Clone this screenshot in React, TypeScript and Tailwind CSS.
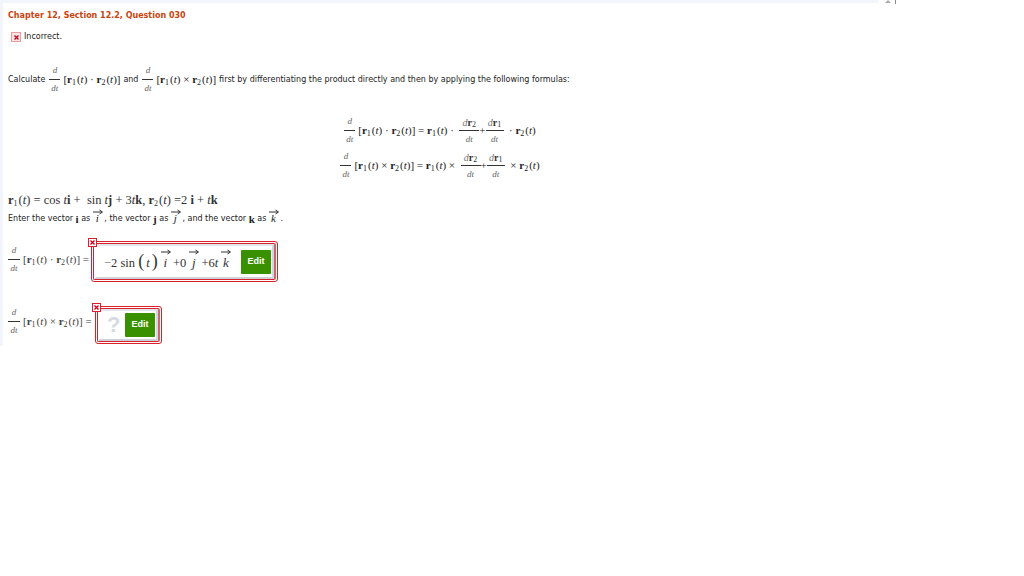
import React from 'react';

const Frac: React.FC<{ top: React.ReactNode; bottom: React.ReactNode; w: string }> = ({ top, bottom, w }) => (
  <span className={`inline-flex flex-col items-center font-['Liberation_Serif',serif] ${w}`}>
    <span className="h-[17px] flex items-end pb-[2px] leading-none italic text-[9px] text-[#666]">{top}</span>
    <span className="w-full h-px bg-[#333]"></span>
    <span className="h-[17px] flex items-start pt-[4px] leading-none italic text-[9px] text-[#666]">{bottom}</span>
  </span>
);

const D: React.FC = () => <span className="relative top-[-2px]">d</span>;

const B: React.FC<{ children: React.ReactNode }> = ({ children }) => <b className="font-bold">{children}</b>;

const R: React.FC<{ n: string }> = ({ n }) => (
  <span><B>r</B><span className="text-[8px] leading-none relative top-[2px]">{n}</span><span className="ml-px">(<i>t</i>)</span></span>
);

const Vec: React.FC<{ c: string; size: string; top: string }> = ({ c, size, top }) => (
  <span className="relative inline-block mx-px min-w-[7px] text-center leading-none">
    <i className={size}>{c}</i>
    <svg className={`absolute left-[-1px] ${top}`} width="10" height="6" viewBox="0 0 10 6">
      <path d="M0 3H9M6.5 1L9.5 3L6.5 5" fill="none" stroke="#333" strokeWidth="1" />
    </svg>
  </span>
);

const XMark: React.FC<{ box: string }> = ({ box }) => (
  <span className={`flex items-center justify-center border ${box}`}>
    <svg width="5" height="5" viewBox="0 0 5 5"><path d="M0.5 0.5L4.5 4.5M4.5 0.5L0.5 4.5" stroke="#d0021b" strokeWidth="1.4" /></svg>
  </span>
);

const Bracket: React.FC<{ op: string }> = ({ op }) => (
  <span>[<R n="1" /> {op} <R n="2" />]</span>
);

const DrTop: React.FC<{ n: string }> = ({ n }) => (
  <span className="not-italic text-[10px] text-[#333]"><i className="text-[#777]">d</i><B>r</B><span className="text-[8px] relative top-[1px]">{n}</span></span>
);

const EditBtn: React.FC = () => (
  <span className="flex items-center justify-center w-[30px] h-[24px] bg-[#3a9100] text-white text-[9px] font-bold font-['Liberation_Sans',sans-serif] rounded-[1px]">Edit</span>
);

const App: React.FC = () => {
  return (
    <div className="relative w-[1024px] h-[576px] bg-white overflow-hidden font-['DejaVu_Sans',sans-serif] text-[8px] text-[#222]">
      {/* page frame strips */}
      <div className="absolute left-0 top-0 w-[878px] h-[3px] bg-[#f2f6fc]"></div>
      <div className="absolute left-0 top-0 w-[3px] h-[346px] bg-[#f2f6fc]"></div>
      <div className="absolute left-[884px] top-0 w-[8px] h-[4px] flex justify-center">
        <span className="w-0 h-0 border-x-[3px] border-x-transparent border-b-[3px] border-b-[#aaa]"></span>
      </div>
      <div className="absolute left-[895px] top-0 w-px h-[4px] bg-[#888]"></div>

      <div className="pl-[8px] pt-[12px]">
        <h1 className="h-[8px] leading-[8px] text-[8px] font-bold text-[#c8440f]">Chapter 12, Section 12.2, Question 030</h1>

        <div className="flex items-center gap-[3px] mt-[12px] ml-[3px] h-[10px]">
          <XMark box="w-[10px] h-[10px] bg-[#fbe6e6] border-[#ee9a9a]" />
          <span>Incorrect.</span>
        </div>

        <div className="flex items-center mt-[20px] h-[35px]">
          <span className="mr-[4px]">Calculate</span>
          <Frac w="w-[11px]" top={<D />} bottom="dt" />
          <span className="ml-[3px] w-[57px] whitespace-nowrap font-['Liberation_Serif',serif] text-[11px]"><Bracket op="·" /></span>
          <span className="ml-[3px] mr-[4px]">and</span>
          <Frac w="w-[11px]" top={<D />} bottom="dt" />
          <span className="ml-[3px] font-['Liberation_Serif',serif] text-[11px]"><Bracket op="×" /></span>
          <span className="ml-[3px]">first by differentiating the product directly and then by applying the following formulas:</span>
        </div>

        {/* formulas */}
        <div className="flex flex-col items-center w-[864px] mt-[16px] font-['Liberation_Serif',serif] text-[11px]">
          <div className="flex items-center h-[35px]">
            <Frac w="w-[11px]" top={<D />} bottom="dt" />
            <span className="ml-[3px]"><Bracket op="·" /> = <R n="1" /> ·&nbsp;&nbsp;</span>
            <Frac w="w-[20px]" top={<DrTop n="2" />} bottom="dt" />
            <span>+</span>
            <Frac w="w-[18px]" top={<DrTop n="1" />} bottom="dt" />
            <span>&nbsp;&nbsp;· <R n="2" /></span>
          </div>
          <div className="flex items-center h-[35px]">
            <Frac w="w-[11px]" top={<D />} bottom="dt" />
            <span className="ml-[3px]"><Bracket op="×" /> = <R n="1" /> ×&nbsp;&nbsp;</span>
            <Frac w="w-[20px]" top={<DrTop n="2" />} bottom="dt" />
            <span>+</span>
            <Frac w="w-[18px]" top={<DrTop n="1" />} bottom="dt" />
            <span>&nbsp;&nbsp;× <R n="2" /></span>
          </div>
        </div>

        <div className="mt-[11px] h-[12px] leading-[12px] font-['Liberation_Serif',serif] text-[12.5px] text-[#333]">
          <R n="1" /> = cos <i>t</i><B>i</B> + &nbsp;sin <i>t</i><B>j</B> + 3<i>t</i><B>k</B>, <R n="2" /> =2 <B>i</B> + <i>t</i><B>k</B>
        </div>

        <div className="mt-[7px] h-[12px] flex items-center">
          <span>Enter the vector&nbsp;</span>
          <span className="font-['Liberation_Serif',serif] font-bold text-[11px]">i</span>
          <span>&nbsp;as&nbsp;</span>
          <span className="font-['Liberation_Serif',serif]"><Vec c="i" size="text-[11px]" top="top-[-4px]" /></span>
          <span>&nbsp;, the vector&nbsp;</span>
          <span className="font-['Liberation_Serif',serif] font-bold text-[11px]">j</span>
          <span>&nbsp;as&nbsp;</span>
          <span className="font-['Liberation_Serif',serif]"><Vec c="j" size="text-[11px]" top="top-[-4px]" /></span>
          <span>&nbsp;, and the vector&nbsp;</span>
          <span className="font-['Liberation_Serif',serif] font-bold text-[11px]">k</span>
          <span>&nbsp;as&nbsp;</span>
          <span className="font-['Liberation_Serif',serif]"><Vec c="k" size="text-[11px]" top="top-[-4px]" /></span>
          <span>&nbsp;.</span>
        </div>

        {/* answer one */}
        <div className="flex items-center mt-[16px] h-[41px] font-['Liberation_Serif',serif] text-[11px] text-[#444]">
          <div className="flex items-center mb-[5px]">
            <Frac w="w-[12px]" top={<D />} bottom="dt" />
            <span className="ml-[3px] w-[68px] whitespace-nowrap"><Bracket op="·" /> =</span>
          </div>
          <div className="relative">
            <div className="absolute left-[-3px] top-[-3px] z-10"><XMark box="w-[9px] h-[9px] bg-white border-[#d9212c]" /></div>
            <div className="w-[187px] h-[41px] border border-[#d9212c] rounded-[3px] p-px">
              <div className="h-full border border-[#d9212c] border-r-2 border-r-[#c96a6a] border-b-[#d9212c] rounded-[2px]">
                <div className="flex items-center w-full h-full pl-[8px] pr-[1px] border-2 border-t-[#e2e6ec] border-l-white border-r-[#d3d8e0] border-b-[#cdd2da]">
                  <span className="text-[12.5px] text-[#333] whitespace-nowrap">
                    <span className="text-[#777]">−</span>2 sin <span className="text-[18px] font-light">(</span><i className="mx-[2px]">t</i><span className="text-[18px] font-light">)</span> <Vec c="i" size="text-[13px]" top="top-[-7px]" /> +0 <Vec c="j" size="text-[13px]" top="top-[-7px]" /> +6<i>t</i> <Vec c="k" size="text-[13px]" top="top-[-7px]" />
                  </span>
                  <span className="ml-auto"><EditBtn /></span>
                </div>
              </div>
            </div>
          </div>
        </div>

        {/* answer two */}
        <div className="flex items-center mt-[24px] h-[38px] font-['Liberation_Serif',serif] text-[11px] text-[#444]">
          <div className="flex items-center mb-[8px]">
            <Frac w="w-[12px]" top={<D />} bottom="dt" />
            <span className="ml-[3px] w-[72px] whitespace-nowrap"><Bracket op="×" /> =</span>
          </div>
          <div className="relative">
            <div className="absolute left-[-3px] top-[-3px] z-10"><XMark box="w-[9px] h-[9px] bg-white border-[#d9212c]" /></div>
            <div className="w-[67px] h-[38px] border border-[#d9212c] rounded-[3px] p-px">
              <div className="h-full border border-[#d9212c] border-r-2 border-r-[#c96a6a] rounded-[2px]">
                <div className="flex items-center w-full h-full pl-[7px] pr-[1px] border-2 border-t-[#e2e6ec] border-l-white border-r-[#d3d8e0] border-b-[#cdd2da]">
                  <span className="text-[22px] leading-none font-bold text-[#d5dae2] font-['Liberation_Sans',sans-serif]">?</span>
                  <span className="ml-auto"><EditBtn /></span>
                </div>
              </div>
            </div>
          </div>
        </div>
      </div>
    </div>
  );
};

export default App;
